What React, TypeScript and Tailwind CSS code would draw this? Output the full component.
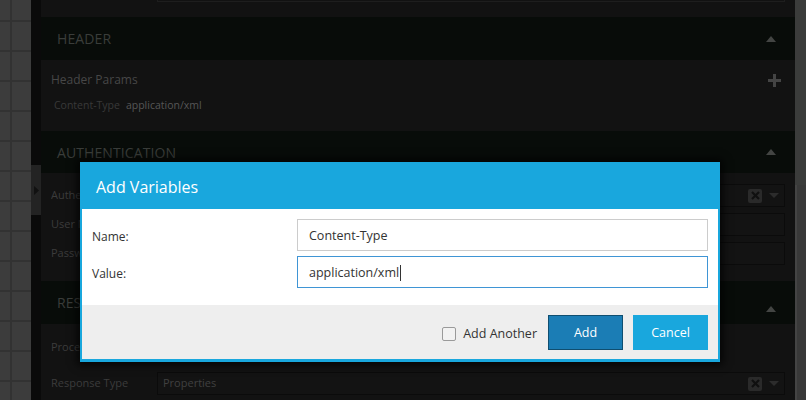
import React from "react";

const CaretUp = () => (
  <svg width="10" height="6" viewBox="0 0 10 6" className="block">
    <path d="M0 6 L5 0 L10 6 Z" fill="#434543" />
  </svg>
);

const ClearAndCaret = () => (
  <div className="flex items-center gap-[7px] pr-[5px]">
    <div className="w-[14px] h-[14px] bg-[#2a2a2a] rounded-[2px] flex items-center justify-center">
      <svg width="9" height="9" viewBox="0 0 9 9">
        <path d="M1 1 L8 8 M8 1 L1 8" stroke="#101010" strokeWidth="2.2" />
      </svg>
    </div>
    <svg width="10" height="5" viewBox="0 0 10 5">
      <path d="M0 0 L10 0 L5 5 Z" fill="#2c2c2c" />
    </svg>
  </div>
);

const Row = ({
  label,
  clip,
  children,
}: {
  label: string;
  clip?: boolean;
  children?: React.ReactNode;
}) => (
  <div className="flex items-center h-[23px]">
    <div className="w-[106px] text-[11px] text-[#3c3c3c] whitespace-nowrap">
      <div className={clip ? "w-[29px] overflow-hidden" : ""}>{label}</div>
    </div>
    <div className="flex-1 h-full border border-[#0b0b0b] bg-[#131313] flex items-center justify-between">
      {children}
    </div>
  </div>
);

export default function App() {
  return (
    <div
      className="relative w-[806px] h-[400px] overflow-hidden flex bg-[#121212]"
      style={{ fontFamily: '"Open Sans", "Noto Sans", sans-serif' }}
    >
      {/* left grid canvas */}
      <div className="w-[31px] h-full bg-[#3c3c3c] [background-image:linear-gradient(#323232_2px,transparent_2px),linear-gradient(90deg,#323232_2px,transparent_2px)] [background-size:30px_30px] [background-position:10px_20px]" />

      {/* dark strip with toggle tab */}
      <div className="w-[10px] h-full bg-[#0a0a0a] flex flex-col pt-[165px]">
        <div className="h-[50px] bg-[#232323] flex items-center justify-center">
          <svg width="5" height="9" viewBox="0 0 5 9">
            <path d="M0 0 L5 4.5 L0 9 Z" fill="#111111" />
          </svg>
        </div>
      </div>

      {/* main panel */}
      <div className="flex-1 flex flex-col bg-[#121212]">
        <div className="h-[17px]">
          <div className="ml-[116px] w-[628px] h-[2px] border-b border-x border-[#1e1e1e]" />
        </div>

        {/* HEADER */}
        <div className="h-[43px] bg-[#080c09] flex items-center justify-between pl-[16px] pr-[19px]">
          <span className="text-[14px] text-[#3a3d3a] tracking-[0.1px]">HEADER</span>
          <CaretUp />
        </div>
        <div className="h-[71px] pl-[10px] pr-[14px] pt-[11px]">
          <div className="flex items-center justify-between">
            <span className="text-[12px] text-[#474747]">Header Params</span>
            <svg width="13" height="13" viewBox="0 0 13 13" className="mt-[1px]">
              <path d="M6.5 0 V13 M0 6.5 H13" stroke="#444444" strokeWidth="3" />
            </svg>
          </div>
          <div className="mt-[9px] pl-[3px] flex gap-[6px] text-[10.5px]">
            <span className="text-[#393939]">Content-Type</span>
            <span className="text-[#565656]">application/xml</span>
          </div>
        </div>

        {/* AUTHENTICATION */}
        <div className="h-[42px] bg-[#080c09] flex items-center justify-between pl-[16px] pr-[19px]">
          <span className="text-[14px] text-[#3a3d3a] tracking-[0.1px]">AUTHENTICATION</span>
          <CaretUp />
        </div>
        <div className="h-[108px] pl-[10px] pr-[10px] pt-[11px] flex flex-col gap-[6px]">
          <Row label="Authentication" clip>
            <span />
            <ClearAndCaret />
          </Row>
          <Row label="User Name" clip />
          <Row label="Password" clip />
        </div>

        {/* RESPONSE */}
        <div className="h-[43px] bg-[#080c09] flex items-center justify-between pl-[16px] pr-[19px]">
          <span className="text-[14px] text-[#3a3d3a] tracking-[0.1px]">RESPONSE</span>
          <div className="mt-[12px]">
            <CaretUp />
          </div>
        </div>
        <div className="flex-1 pl-[10px] pr-[10px] pt-[15px] flex flex-col">
          <div className="h-[16px] w-[29px] overflow-hidden whitespace-nowrap text-[11px] text-[#3c3c3c] leading-[16px]">
            Process Response
          </div>
          <div className="mt-[17px]">
            <Row label="Response Type">
              <span className="pl-[5px] text-[11px] text-[#404040]">Properties</span>
              <ClearAndCaret />
            </Row>
          </div>
        </div>
      </div>

      {/* right strip */}
      <div className="w-[11px] h-full bg-[#3b3c3b] flex flex-col">
        <div className="h-[185px]" />
        <div className="flex-1 border-l-2 border-[#444444] bg-[#393939]" />
      </div>

      {/* modal */}
      <div className="absolute left-[80px] top-[162px] w-[640px] h-[200px] border-2 border-b-[3px] border-[#19a7dd] bg-white flex flex-col shadow-[0_0_8px_3px_rgba(0,0,0,0.75)]">
        <div className="h-[45px] bg-[#19a7dd] flex items-center pl-[14px]">
          <span className="text-[16px] text-white">Add Variables</span>
        </div>
        <div className="h-[96px] bg-white pt-[10px] px-[10px] flex flex-col gap-[5px]">
          <div className="flex items-center h-[32px]">
            <label className="w-[205px] text-[12px] text-[#333333] pt-[3px]">Name:</label>
            <div className="flex-1 h-full border border-[#cccccc] flex items-center pl-[11px] pt-[2px] text-[12.5px] text-[#333333]">
              Content-Type
            </div>
          </div>
          <div className="flex items-center h-[32px]">
            <label className="w-[205px] text-[12px] text-[#333333] pt-[3px]">Value:</label>
            <div className="flex-1 h-full border border-[#3f95d5] flex items-center pl-[11px] pt-[2px] text-[12.5px] text-[#333333]">
              application/xml
              <span className="w-[1px] h-[16px] bg-[#333333] ml-[1px]" />
            </div>
          </div>
        </div>
        <div className="h-[54px] bg-[#eeeeee] flex items-start justify-end pt-[10px] pr-[10px]">
          <div className="h-[35px] flex items-center mr-[11px]">
            <div className="w-[14px] h-[14px] border-[1.5px] border-[#9a9a9a] rounded-[2px] bg-[#f2f2f2] mt-[2px]" />
            <span className="ml-[7px] text-[12.5px] text-[#333333] pt-[3px]">Add Another</span>
          </div>
          <button className="w-[75px] h-[35px] bg-[#1b7db5] border border-[#0f4e70] text-white text-[12.5px] mr-[10px] pt-[2px]">
            Add
          </button>
          <button className="w-[75px] h-[35px] bg-[#19a7dd] text-white text-[12.5px] pt-[2px]">Cancel</button>
        </div>
      </div>
    </div>
  );
}
